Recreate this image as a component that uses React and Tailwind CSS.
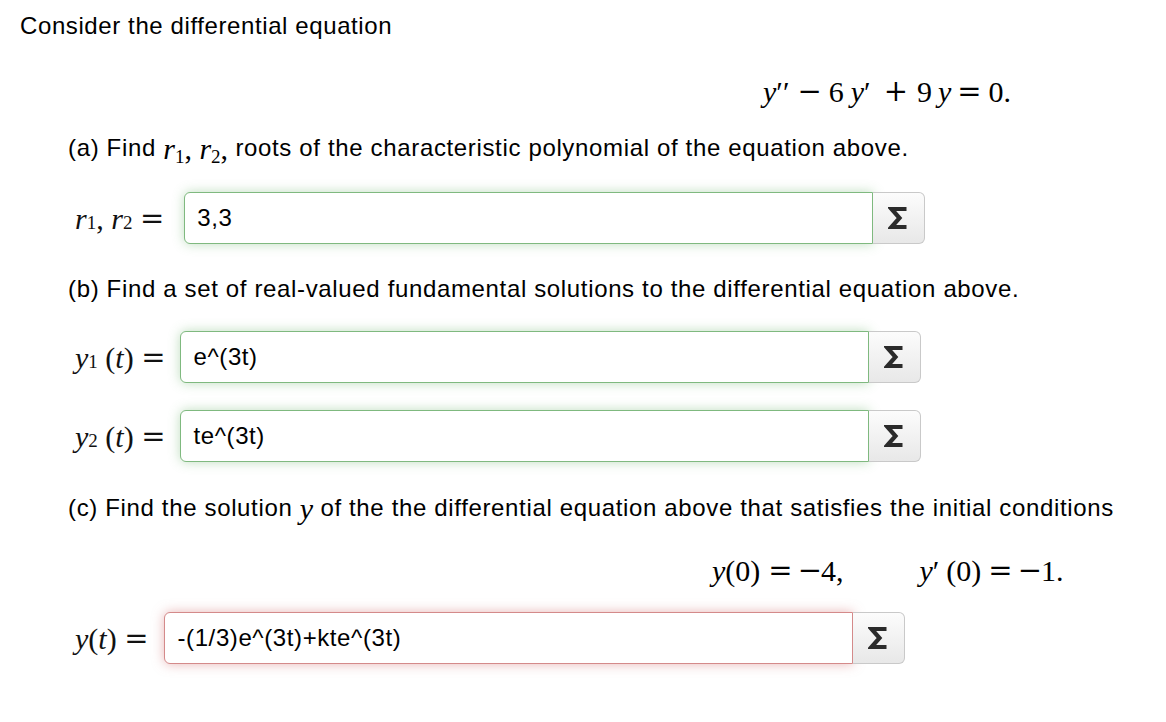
import React from 'react';

const sans = { fontFamily: '"Liberation Sans", Arial, sans-serif' };

function SigmaIcon() {
  return (
    <svg width="21" height="24" viewBox="0 0 21 24" aria-hidden="true">
      <path d="M18.5 3 H3.5 L11.5 12 L3.5 21 H18.5" fill="none" stroke="#2b2b2b" strokeWidth="4.2" strokeLinejoin="miter" strokeMiterlimit="10" />
    </svg>
  );
}

function Sigma() {
  return (
    <div className="flex h-full w-[52px] items-center justify-center rounded-r-[6px] border border-l-0 border-[#c9c9c9] bg-gradient-to-b from-[#fcfcfc] to-[#e8e8e8]">
      <SigmaIcon />
    </div>
  );
}

function AnswerBox({ value, tone = 'green' }) {
  const box =
    tone === 'green'
      ? 'border-[#7fb97f] shadow-[0_0_12px_rgba(110,180,110,0.45)]'
      : 'border-[#d48a8a] shadow-[0_0_12px_rgba(210,110,110,0.5)]';
  return (
    <div className="flex h-[52px] w-[741px]">
      <div className={`flex flex-1 items-center rounded-l-[6px] border bg-white pl-[12px] text-[24px] tracking-[0.6px] text-black ${box}`}>
        {value}
      </div>
      <Sigma />
    </div>
  );
}

function MathRow({ label, value, tone, mt, gap }) {
  return (
    <div className={`flex h-[52px] items-center pl-[75px] ${mt}`}>
      <div className={`flex items-center font-['Liberation_Serif'] text-[30px] text-[#111] whitespace-nowrap ${gap}`}>
        {label}
      </div>
      <AnswerBox value={value} tone={tone} />
    </div>
  );
}

const I = ({ children }) => <i className="italic">{children}</i>;
const Sub = ({ children }) => <sub className="text-[19px] not-italic">{children}</sub>;
// wider math operators (= + −)
const Op = ({ children }) => <span className="font-['DejaVu_Serif'] text-[29px] leading-none">{children}</span>;
// same operator with its side bearings trimmed, so margins read as visible gaps
const OpT = ({ children }) => (
  <span className="ml-[-6px] font-['DejaVu_Serif'] text-[29px] leading-none">{children}</span>
);

export default function App() {
  return (
    <div className="min-h-[722px] w-[1166px] bg-white pt-[12px] text-black" style={sans}>
      <div className="flex h-[28px] items-center pl-[20px] text-[24px] tracking-[0.6px]">Consider the differential equation</div>

      <div className="mt-[36px] flex h-[30px] items-center pl-[763px] font-['Liberation_Serif'] text-[30px] whitespace-nowrap">
        <span><I>y</I>′′</span>
        <span className="ml-[14px] flex"><OpT>−</OpT></span>
        <span className="ml-[7px]">6</span>
        <span className="ml-[7px]"><I>y</I>′</span>
        <span className="ml-[19px] flex"><OpT>+</OpT></span>
        <span className="ml-[9px]">9</span>
        <span className="ml-[6px]"><I>y</I></span>
        <span className="ml-[12px] flex"><OpT>=</OpT></span>
        <span className="ml-[7px]">0.</span>
      </div>

      <div className="mt-[28px] flex h-[28px] items-center pl-[68px] text-[24px] tracking-[0.65px] whitespace-nowrap">
        (a) Find&nbsp;
        <span className="font-['Liberation_Serif'] text-[30px] tracking-normal">
          <I>r</I><Sub>1</Sub>, <I>r</I><Sub>2</Sub>,
        </span>
        &nbsp;roots of the characteristic polynomial of the equation above.
      </div>

      <MathRow
        mt="mt-[30px]"
        gap="mr-[20px]"
        label={<><I>r</I><Sub>1</Sub>,&nbsp;<I>r</I><Sub>2</Sub>&nbsp;<Op>=</Op></>}
        value="3,3"
        tone="green"
      />

      <div className="mt-[31px] flex h-[28px] items-center pl-[68px] text-[24px] tracking-[0.65px] whitespace-nowrap">
        (b) Find a set of real-valued fundamental solutions to the differential equation above.
      </div>

      <MathRow
        mt="mt-[28px]"
        gap="mr-[15px]"
        label={<><I>y</I><Sub>1</Sub>&nbsp;(<I>t</I>)&nbsp;<Op>=</Op></>}
        value="e^(3t)"
        tone="green"
      />
      <MathRow
        mt="mt-[27px]"
        gap="mr-[15px]"
        label={<><I>y</I><Sub>2</Sub>&nbsp;(<I>t</I>)&nbsp;<Op>=</Op></>}
        value="te^(3t)"
        tone="green"
      />

      <div className="mt-[32px] flex h-[28px] items-center pl-[68px] text-[24px] tracking-[0.65px] whitespace-nowrap">
        (c) Find the solution&nbsp;
        <span className="font-['Liberation_Serif'] text-[30px] tracking-normal"><I>y</I></span>
        &nbsp;of the the differential equation above that satisfies the initial conditions
      </div>

      <div className="mt-[33px] flex h-[30px] items-center pl-[712px] font-['Liberation_Serif'] text-[30px] whitespace-nowrap">
        <span><I>y</I>(0)</span>
        <span className="ml-[14px] flex"><OpT>=</OpT></span>
        <span className="ml-[11px] flex items-center"><OpT>−</OpT><span className="ml-[-1px]">4,</span></span>
        <span className="ml-[76px]"><I>y</I>′</span>
        <span className="ml-[7px]">(0)</span>
        <span className="ml-[13px] flex"><OpT>=</OpT></span>
        <span className="ml-[11px] flex items-center"><OpT>−</OpT><span className="ml-[-1px]">1.</span></span>
      </div>

      <MathRow
        mt="mt-[27px]"
        gap="mr-[16px]"
        label={<><I>y</I>(<I>t</I>)&nbsp;<Op>=</Op></>}
        value="-(1/3)e^(3t)+kte^(3t)"
        tone="red"
      />
    </div>
  );
}
